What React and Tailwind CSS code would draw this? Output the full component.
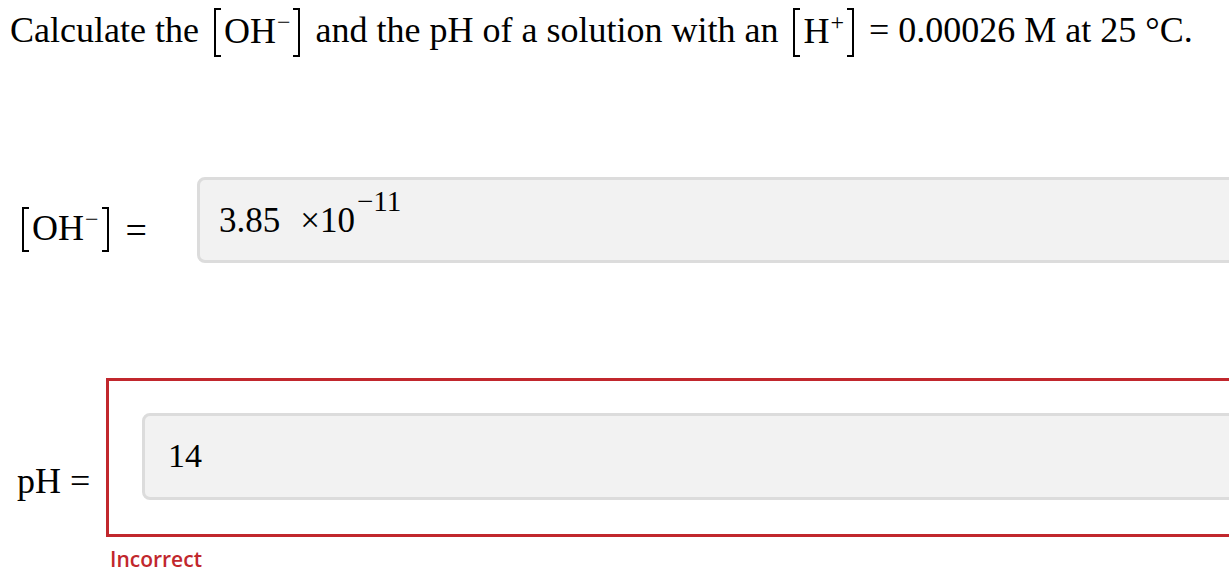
import React from 'react';

const serif = { fontFamily: '"Liberation Serif", "Times New Roman", serif' };

// tall square bracket drawn with borders, like the typeset \left[ \right]
const Bracket = ({ side, h }) => (
  <span
    className={`block ${h} w-[7px] border-black border-y-[2px] ${
      side === 'l' ? 'border-l-[2px]' : 'border-r-[2px]'
    }`}
  />
);

const Ion = ({ base, charge, h = 'h-[45px]', className = '' }) => (
  <span className={`inline-flex items-center align-middle ${className}`}>
    <Bracket side="l" h={h} />
    <span className="leading-none px-[3px] -translate-y-[2px]">
      {base}
      <sup className="text-[24px] -top-[13px] ml-[1px]">{charge}</sup>
    </span>
    <Bracket side="r" h={h} />
  </span>
);

export default function App() {
  return (
    <div className="w-[1229px] h-[588px] overflow-hidden bg-white text-black" style={serif}>
      {/* QUESTION */}
      <div className="h-[60px] pl-[10px] text-[36px] leading-[60px] whitespace-nowrap">
        Calculate the{' '}
        <Ion base="OH" charge="−" h="h-[49px]" className="mx-[6px] -translate-y-[1px]" />{' '}
        and the pH of a solution with an{' '}
        <Ion base="H" charge="+" h="h-[49px]" className="mx-[6px] -translate-y-[1px]" />{' '}
        = 0.00026 M at 25 °C.
      </div>

      {/* OH ROW */}
      <div className="flex items-start mt-[117px]">
        <div className="w-[197px] shrink-0 pl-[22px] pt-[30px] text-[36px] flex items-center">
          <Ion base="OH" charge="−" />
          <span className="ml-[17px] leading-none text-[38px]">=</span>
        </div>
        <div className="w-[1100px] h-[86px] shrink-0 rounded-[8px] border-[3px] border-[#dcdcdc] bg-[#f2f2f2] pl-[19px] pt-[23px] text-[35px] leading-none whitespace-nowrap">
          3.85
          <span className="ml-[20px]">×10</span>
          <sup className="text-[29px] -top-[21px] ml-[2px]">−11</sup>
        </div>
      </div>

      {/* PH ROW */}
      <div className="flex items-start mt-[115px]">
        <div className="w-[106px] shrink-0 pl-[17px] pt-[85px] text-[36px] leading-none whitespace-nowrap">
          pH =
        </div>
        <div className="flex flex-col shrink-0">
          <div className="w-[1200px] h-[159px] border-[3px] border-[#c1272d] pl-[33px] pt-[32px]">
            <div className="h-[87px] rounded-[8px] border-[3px] border-[#dcdcdc] bg-[#f2f2f2] pl-[23px] pt-[23px] text-[34px] leading-none">
              14
            </div>
          </div>
          <div
            className="pl-[4px] mt-[12px] text-[21px] leading-none font-semibold text-[#c1272d]"
            style={{ fontFamily: '"Open Sans", sans-serif' }}
          >
            Incorrect
          </div>
        </div>
      </div>
    </div>
  );
}
